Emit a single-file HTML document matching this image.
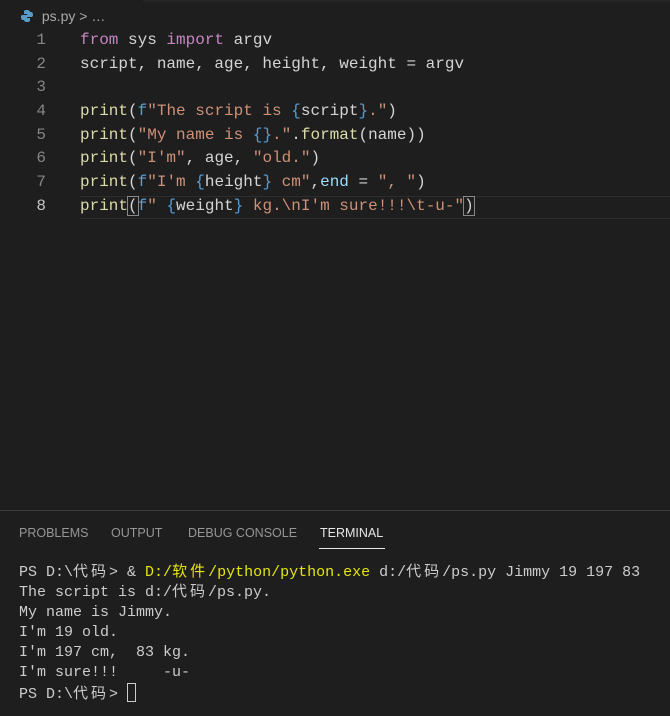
<!DOCTYPE html>
<html><head><meta charset="utf-8"><style>
body{margin:0;width:670px;height:716px;background:#1e1e1e;overflow:hidden;position:relative;font-family:"Liberation Sans",sans-serif}
.bc{position:absolute;top:8px;left:20px;color:#a9a9a9;font-size:14px}
.code{position:absolute;top:29px;left:0;font-family:"Liberation Mono",monospace;font-size:16px;color:#d4d4d4}
.l{height:23.7px;line-height:23.7px;position:relative;white-space:pre}
.n{position:absolute;left:0;width:46px;text-align:right;color:#858585}
.t{position:absolute;left:80px}
.k{color:#c586c0}.s{color:#ce9178}.f{color:#dcdcaa}.b{color:#569cd6}.p{color:#9cdcfe}
.cur{position:absolute;left:80px;right:0;top:196px;height:21px;border-top:1px solid #2d2d2d;border-bottom:1px solid #2d2d2d}
.br{outline:1px solid #888;}
.panel{position:absolute;top:510px;left:0;right:0;bottom:0;border-top:1px solid #3c3c3c}
.tabs{position:absolute;top:15px;left:19px;font-size:12.5px;color:#969696}
.tabs span{position:absolute;white-space:nowrap}
.term{position:absolute;top:52px;left:19px;font-family:"Liberation Mono","Noto Sans CJK SC",monospace;font-size:15px;color:#cccccc}
.term div{height:20px;line-height:20px;white-space:pre;overflow:visible}
.c{letter-spacing:3px}
.y{color:#e5e510}
</style></head><body>
<div style="position:absolute;top:0;left:143px;right:0;height:2px;background:#252526"></div>
<div class="bc"><svg width="14" height="14" viewBox="0 0 14 14" style="vertical-align:-2px"><path d="M7 1C4 1 4 2 4 3v2h3v1H2.5C1 6 1 7.5 1 8s0 3 2 3h1V9c0-1 1-2 2-2h3c1 0 1-1 1-1V3c0-1-1-2-3-2z" fill="#5b9bc7"/><path d="M7 13c3 0 3-1 3-2V9H7V8h4.5C13 8 13 6.5 13 6s0-3-2-3h-1v2c0 1-1 2-2 2H5c-1 0-1 1-1 1v3c0 1 1 2 3 2z" fill="#5b9bc7"/></svg> <span style="margin-left:4px">ps.py</span> <span>&gt; …</span></div>
<div class="cur"></div>
<div class="code">
<div class="l"><span class="n">1</span><span class="t"><span class="k">from</span> sys <span class="k">import</span> argv</span></div>
<div class="l"><span class="n">2</span><span class="t">script, name, age, height, weight = argv</span></div>
<div class="l"><span class="n">3</span><span class="t"></span></div>
<div class="l"><span class="n">4</span><span class="t"><span class="f">print</span>(<span class="b">f</span><span class="s">"The script is </span><span class="b">{</span>script<span class="b">}</span><span class="s">."</span>)</span></div>
<div class="l"><span class="n">5</span><span class="t"><span class="f">print</span>(<span class="s">"My name is </span><span class="b">{}</span><span class="s">."</span>.<span class="f">format</span>(name))</span></div>
<div class="l"><span class="n">6</span><span class="t"><span class="f">print</span>(<span class="s">"I'm"</span>, age, <span class="s">"old."</span>)</span></div>
<div class="l"><span class="n">7</span><span class="t"><span class="f">print</span>(<span class="b">f</span><span class="s">"I'm </span><span class="b">{</span>height<span class="b">}</span><span class="s"> cm"</span>,<span class="p">end</span> = <span class="s">", "</span>)</span></div>
<div class="l"><span class="n" style="color:#c6c6c6">8</span><span class="t"><span class="f">print</span><span class="br">(</span><span class="b">f</span><span class="s">" </span><span class="b">{</span>weight<span class="b">}</span><span class="s"> kg.\nI'm sure!!!\t-u-"</span><span class="br">)</span></span></div>
</div>
<div class="panel">
<div class="tabs"><span style="left:0">PROBLEMS</span><span style="left:92px">OUTPUT</span><span style="left:169px">DEBUG CONSOLE</span><span style="left:301px;color:#e7e7e7">TERMINAL</span>
<div style="position:absolute;left:300px;top:22px;width:66px;height:1px;background:#e7e7e7"></div></div>
<div class="term"><div>PS D:\<span class="c">代码</span>&gt; &amp; <span class="y">D:/<span class="c">软件</span>/python/python.exe</span> d:/<span class="c">代码</span>/ps.py Jimmy 19 197 83</div><div>The script is d:/<span class="c">代码</span>/ps.py.</div><div>My name is Jimmy.</div><div>I'm 19 old.</div><div>I'm 197 cm,  83 kg.</div><div>I'm sure!!!     -u-</div><div>PS D:\<span class="c">代码</span>&gt; <span style="display:inline-block;width:7px;height:17px;border:1px solid #ccc;vertical-align:-4px"></span></div></div>
</div>
</body></html>
